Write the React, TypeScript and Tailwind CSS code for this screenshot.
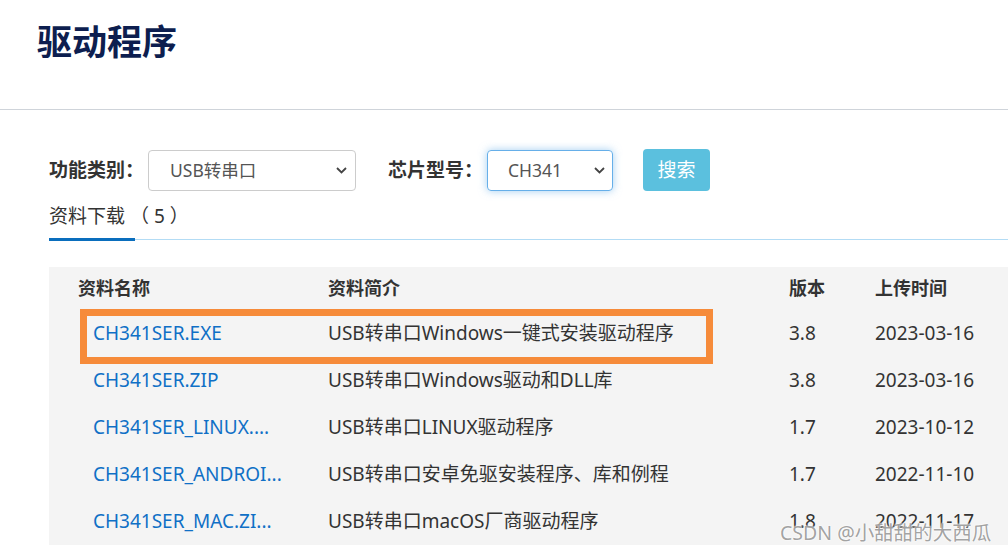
import React from "react";

const rows = [
  { name: "CH341SER.EXE", desc: "USB转串口Windows一键式安装驱动程序", ver: "3.8", date: "2023-03-16" },
  { name: "CH341SER.ZIP", desc: "USB转串口Windows驱动和DLL库", ver: "3.8", date: "2023-03-16" },
  { name: "CH341SER_LINUX....", desc: "USB转串口LINUX驱动程序", ver: "1.7", date: "2023-10-12" },
  { name: "CH341SER_ANDROI...", desc: "USB转串口安卓免驱安装程序、库和例程", ver: "1.7", date: "2022-11-10" },
  { name: "CH341SER_MAC.ZI...", desc: "USB转串口macOS厂商驱动程序", ver: "1.8", date: "2022-11-17" },
];

function Chevron() {
  return (
    <svg width="11" height="7" viewBox="0 0 11 7" className="shrink-0">
      <path d="M1 1l4.5 4.5L10 1" fill="none" stroke="#444" strokeWidth="1.8" />
    </svg>
  );
}

export default function App() {
  return (
    <div
      className="relative w-[1008px] h-[553px] overflow-hidden bg-white text-[#333]"
      style={{ fontFamily: '"Noto Sans", "Noto Sans CJK SC", sans-serif' }}
    >
      {/* 标题 */}
      <div className="h-[110px] pl-[37px] pt-[18px] border-b border-[#cfd4da]">
        <h1 className="text-[35px] leading-[48px] font-bold text-[#0d1e4f]">驱动程序</h1>
      </div>

      <div className="pl-[49px]">
        {/* 筛选 */}
        <div className="flex items-center h-[42px] mt-[39px]">
          <span className="text-[19px] font-bold">功能类别：</span>
          <div className="ml-[4px] w-[208px] h-[41px] flex items-center justify-between pl-[21px] pr-[8px] border border-[#ccc] rounded-[4px] text-[17.5px] text-[#555]">
            <span>USB转串口</span>
            <Chevron />
          </div>
          <span className="ml-[32px] text-[19px] font-bold">芯片型号：</span>
          <div className="ml-[4px] w-[126px] h-[41px] flex items-center justify-between pl-[20px] pr-[7px] border border-[#66afe9] rounded-[4px] text-[17.5px] text-[#555] shadow-[0_0_8px_rgba(102,175,233,0.6)]">
            <span>CH341</span>
            <Chevron />
          </div>
          <button className="ml-[30px] w-[67px] h-[42px] rounded-[4px] bg-[#5bc0de] text-white text-[19px]">搜索</button>
        </div>

        {/* 选项卡 */}
        <div className="mt-[4px]">
          <div className="h-[43px] flex items-center text-[19px] whitespace-nowrap">资料下载 （ 5 ）</div>
          <div className="flex items-center h-[3px]">
            <div className="w-[86px] h-[3px] bg-[#0a6ebd]" />
            <div className="flex-1 h-px bg-[#b3dcf5]" />
          </div>
        </div>

        {/* 表格 */}
        <div className="relative mt-[26px] bg-[#f4f4f4] text-[19px]">
          <div className="grid grid-cols-[279px_461px_86px_1fr] h-[43px] items-center text-[18px] font-bold">
            <div className="pl-[29px]">资料名称</div>
            <div>资料简介</div>
            <div>版本</div>
            <div>上传时间</div>
          </div>
          {rows.map((r) => (
            <div key={r.name} className="grid grid-cols-[279px_461px_86px_1fr] h-[47px] items-center">
              <div className="pl-[44px] text-[#1070c6] whitespace-nowrap">{r.name}</div>
              <div className="whitespace-nowrap">{r.desc}</div>
              <div>{r.ver}</div>
              <div>{r.date}</div>
            </div>
          ))}

          {/* 标注框 */}
          <div className="absolute left-[31px] top-[42px] w-[633px] h-[55px] border-[7px] border-[#f68b3a]" />
        </div>
      </div>

      {/* 水印 */}
      <div
        className="absolute left-[780px] top-[518px] text-[19.5px] text-[#8a8a8a]/80 whitespace-nowrap"
        style={{ textShadow: "0 0 2px #fff, 0 0 2px #fff" }}
      >
        CSDN @小甜甜的大西瓜
      </div>
    </div>
  );
}
